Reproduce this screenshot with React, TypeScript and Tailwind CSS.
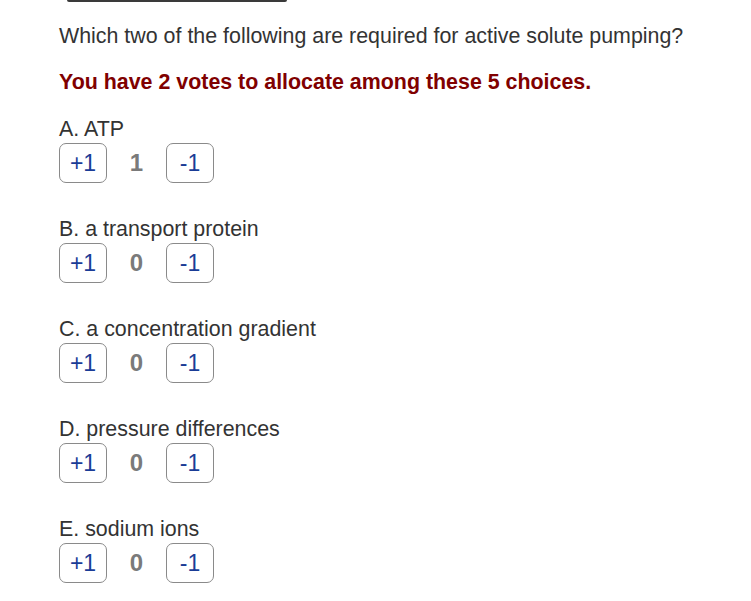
const choices = [
  { label: "A. ATP", votes: 1 },
  { label: "B. a transport protein", votes: 0 },
  { label: "C. a concentration gradient", votes: 0 },
  { label: "D. pressure differences", votes: 0 },
  { label: "E. sodium ions", votes: 0 },
];

const VoteButton = ({ text }: { text: string }) => (
  <button className="w-[48px] h-[40px] rounded-[7px] border border-[#8a8a8a] bg-white text-[length:23px] leading-none text-[#1a3c96] flex items-center justify-center">
    {text}
  </button>
);

export default function App() {
  return (
    <div className="min-h-[601px] w-[751px] bg-white font-['Liberation_Sans',Arial,sans-serif] text-[#333]">
      <div className="ml-[67px] w-[220px] h-[2px] bg-[#3a3a3a] rounded-b-[2px]" />
      <div className="pl-[59px] pt-[22px]">
        <p className="text-[length:21.4px] leading-[24px]">
          Which two of the following are required for active solute pumping?
        </p>
        <p className="mt-[22px] text-[length:21.4px] leading-[24px] font-bold text-[#800000]">
          You have 2 votes to allocate among these 5 choices.
        </p>
        <div className="mt-[23px] flex flex-col gap-[34px]">
          {choices.map((c) => (
            <div key={c.label}>
              <div className="text-[length:21.4px] leading-[24px]">{c.label}</div>
              <div className="mt-[2px] flex items-center">
                <VoteButton text="+1" />
                <div className="w-[59px] text-center text-[24px] leading-[24px] font-bold text-[#7a7a7a]">
                  {c.votes}
                </div>
                <VoteButton text="-1" />
              </div>
            </div>
          ))}
        </div>
      </div>
    </div>
  );
}
